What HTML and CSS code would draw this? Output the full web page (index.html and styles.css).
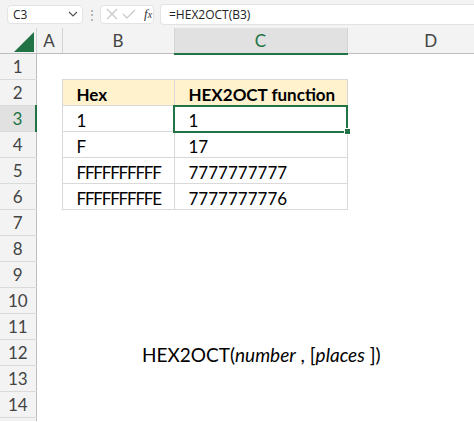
FILE: index.html
```html
<!DOCTYPE html>
<html lang="en">
<head>
    <meta charset="UTF-8">
    <title>HEX2OCT</title>
    <link rel="stylesheet" href="styles.css">
</head>
<body>
    <div class="formula-bar">
        <div class="name-box">
            <span>C3</span>
            <svg width="10" height="6" viewBox="0 0 10 6"><path d="M1 1 L5 5 L9 1" fill="none" stroke="#555" stroke-width="1.2"/></svg>
        </div>
        <div class="grip">&#8942;</div>
        <div class="fx-box">
            <svg width="12" height="12" viewBox="0 0 12 12"><path d="M1 1 L11 11 M11 1 L1 11" stroke="#c8c8c8" stroke-width="1.2"/></svg>
            <svg width="14" height="12" viewBox="0 0 14 12"><path d="M1 6 L5 10 L13 2" fill="none" stroke="#c8c8c8" stroke-width="1.2"/></svg>
            <span class="fx"><i>f</i><i>x</i></span>
        </div>
        <div class="formula">=HEX2OCT(B3)</div>
    </div>

    <table class="sheet">
        <colgroup>
            <col style="width:36px">
            <col style="width:26px">
            <col style="width:112px">
            <col style="width:173px">
            <col style="width:127px">
        </colgroup>
        <thead>
            <tr>
                <th class="corner">
                    <svg width="20" height="20" viewBox="0 0 20 20"><path d="M20 0 L20 20 L0 20 Z" fill="#217346"/></svg>
                </th>
                <th>A</th>
                <th>B</th>
                <th class="active-col">C</th>
                <th class="last-col">D</th>
            </tr>
        </thead>
        <tbody>
            <tr><th>1</th><td></td><td></td><td></td><td></td></tr>
            <tr><th>2</th><td></td><td class="cell head">Hex</td><td class="cell head">HEX2OCT function</td><td></td></tr>
            <tr><th class="active-row">3</th><td></td><td class="cell">1</td><td class="cell selected">1</td><td></td></tr>
            <tr><th>4</th><td></td><td class="cell">F</td><td class="cell">17</td><td></td></tr>
            <tr><th>5</th><td></td><td class="cell hex">FFFFFFFFFF</td><td class="cell">7777777777</td><td></td></tr>
            <tr><th>6</th><td></td><td class="cell hex">FFFFFFFFFE</td><td class="cell">7777777776</td><td></td></tr>
            <tr><th>7</th><td></td><td></td><td></td><td></td></tr>
            <tr><th>8</th><td></td><td></td><td></td><td></td></tr>
            <tr><th>9</th><td></td><td></td><td></td><td></td></tr>
            <tr><th>10</th><td></td><td></td><td></td><td></td></tr>
            <tr><th>11</th><td></td><td></td><td></td><td></td></tr>
            <tr><th>12</th><td></td><td colspan="3" class="syntax">HEX2OCT(<i>number</i> , [<i>places</i> ])</td></tr>
            <tr><th>13</th><td></td><td></td><td></td><td></td></tr>
            <tr><th>14</th><td></td><td></td><td></td><td></td></tr>
            <tr class="stub"><th></th><td></td><td></td><td></td><td></td></tr>
        </tbody>
    </table>
</body>
</html>
```

FILE: styles.css
```css
body {
    margin: 0;
    width: 474px;
    height: 422px;
    overflow: hidden;
    background-color: white;
    font-family: 'Lato', 'Liberation Sans', sans-serif;
}
.formula-bar {
    display: flex;
    align-items: center;
    height: 28px;
    padding: 0 0 0 7px;
    background-color: #f3f3f3;
    font-family: 'Open Sans', 'Liberation Sans', sans-serif;
    font-size: 12px;
    color: #222;
}
.name-box {
    display: flex;
    align-items: center;
    justify-content: space-between;
    width: 76px;
    height: 19px;
    padding: 0 4px 0 5px;
    box-sizing: border-box;
    background-color: white;
    border: 1px solid #e3e3e3;
    border-radius: 4px;
}
.grip {
    width: 17px;
    text-align: center;
    color: #999;
    font-size: 12px;
}
.fx-box {
    display: flex;
    align-items: center;
    gap: 4px;
    width: 54px;
    height: 19px;
    padding: 0 0 0 5px;
    box-sizing: border-box;
    background-color: white;
    border: 1px solid #e3e3e3;
    border-radius: 4px;
}
.fx {
    margin-left: 4px;
    font-family: 'Liberation Serif', serif;
    font-size: 13px;
    color: #333;
}
.fx i:last-child {
    font-size: 10px;
}
.formula {
    flex: 1;
    height: 19px;
    margin-left: 6px;
    padding-left: 8px;
    line-height: 19px;
    background-color: white;
    border: 1px solid #e3e3e3;
    border-right: none;
    border-radius: 4px 0 0 4px;
}
.sheet {
    table-layout: fixed;
    border-collapse: collapse;
    width: 474px;
    font-size: 17px;
    color: #000;
}
.sheet thead th {
    height: 24px;
    padding: 0;
    background-color: #f3f3f3;
    border-right: 1px solid #d4d4d4;
    border-bottom: 1px solid #bdbdbd;
    font-weight: normal;
    font-size: 17px;
    color: #444;
}
.sheet thead th.corner {
    text-align: right;
    vertical-align: bottom;
    padding: 0 2px 1px 0;
    line-height: 0;
}
.sheet thead th.active-col {
    background-color: #e1e1e1;
    border-bottom: 2px solid #217346;
    color: #217346;
}
.sheet thead th.last-col {
    border-right: none;
    padding-left: 40px;
}
.sheet tbody th {
    height: 25px;
    padding: 0;
    background-color: #f3f3f3;
    border-right: 1px solid #bdbdbd;
    border-bottom: 1px solid #dadada;
    font-weight: normal;
    font-size: 17px;
    color: #444;
}
.sheet tbody th.active-row {
    background-color: #e1e1e1;
    border-right: 2px solid #217346;
    color: #217346;
}
.sheet tbody .stub th,
.sheet tbody .stub td {
    height: 3px;
    border-bottom: none;
}
.sheet td {
    padding: 0;
}
.cell {
    padding: 3px 0 0 14px !important;
    border: 1px solid #d9d9d9;
}
.cell.head {
    background-color: #fff2cc;
    font-weight: bold;
}
.cell.hex {
    letter-spacing: -1.2px;
}
.cell.selected {
    position: relative;
    outline: 2px solid #217346;
    outline-offset: -1px;
}
.cell.selected::after {
    content: "";
    position: absolute;
    right: -4px;
    bottom: -4px;
    width: 5px;
    height: 5px;
    background-color: #217346;
    border: 1px solid white;
}
.syntax {
    padding: 3px 0 0 80px !important;
    font-size: 19px;
}
```
